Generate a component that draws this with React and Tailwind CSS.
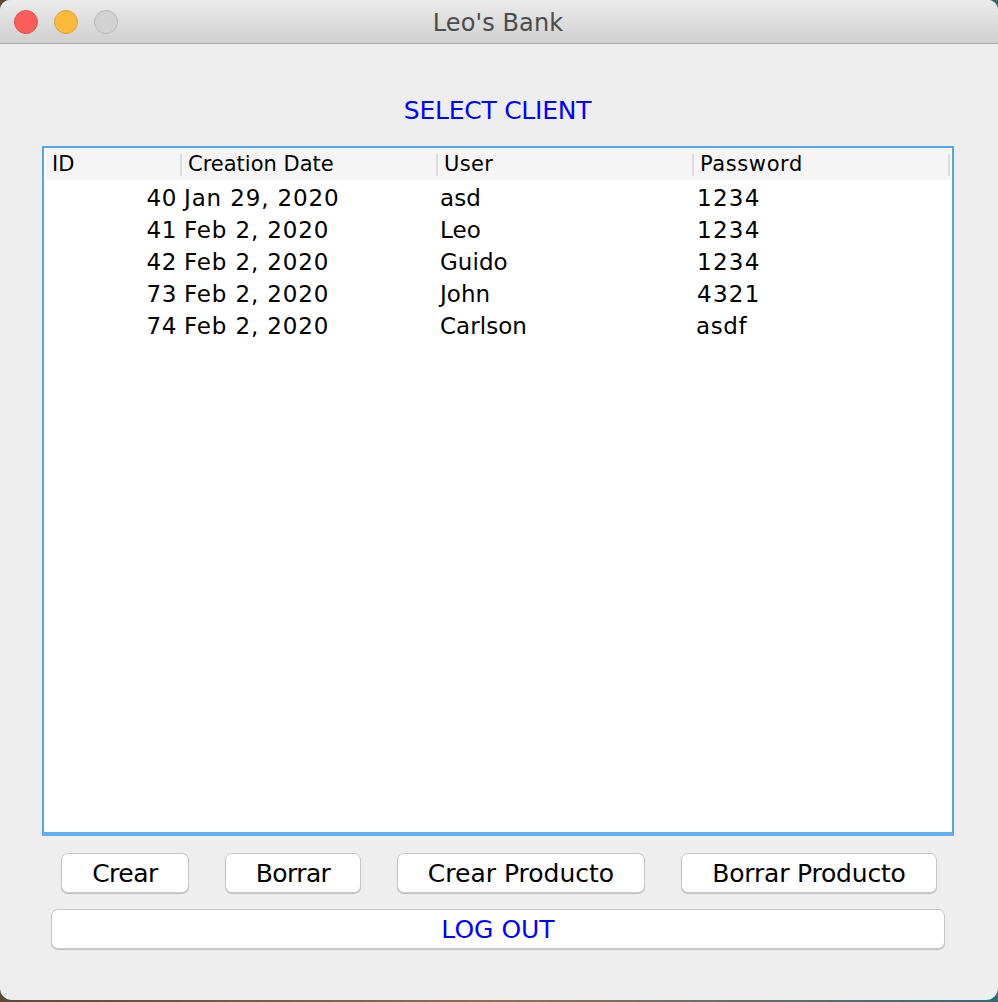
const clients = [
    { id: 40, date: 'Jan 29, 2020', user: 'asd', password: '1234' },
    { id: 41, date: 'Feb 2, 2020', user: 'Leo', password: '1234' },
    { id: 42, date: 'Feb 2, 2020', user: 'Guido', password: '1234' },
    { id: 73, date: 'Feb 2, 2020', user: 'John', password: '4321' },
    { id: 74, date: 'Feb 2, 2020', user: 'Carlson', password: 'asdf' },
];

const btn = 'h-10 bg-white rounded-[7px] border border-[#c8c8c8] shadow-[0_1px_1px_rgba(0,0,0,0.2)] text-[25px] leading-none';

const HeaderCell = ({ className, children }) => (
    <div className={`h-[22px] pl-[6px] flex items-center border-r-2 border-[#dcdcdc] ${className}`}>{children}</div>
);

const App = () => {
    return (
        <div className="w-[998px] h-[1002px] bg-gradient-to-r from-[#5a4a38] via-[#8a7050] to-[#2f6a78] overflow-hidden font-['DejaVu_Sans',sans-serif] text-black">
            <div className="h-[1000px] bg-[#eeeeee] rounded-t-[10px] rounded-b-[12px] overflow-hidden flex flex-col">
                {/* Title bar */}
                <div className="h-[44px] shrink-0 bg-gradient-to-b from-[#ebebeb] to-[#d0d0d0] border-b border-[#a9a9a9] flex items-center relative pl-[14px] gap-[16px]">
                    <span className="w-6 h-6 rounded-full bg-[#fc5e5b] border border-[#e2504e]"></span>
                    <span className="w-6 h-6 rounded-full bg-[#fdb93c] border border-[#e2a233]"></span>
                    <span className="w-6 h-6 rounded-full bg-[#d2d2d2] border border-[#b8b8b8]"></span>
                    <div className="absolute inset-0 pt-[2px] pr-[2px] flex items-center justify-center text-[24px] tracking-[0.1px] text-[#4c4c4c]">Leo's Bank</div>
                </div>

                <div className="h-[102px] pt-[52px] pr-[3px] text-center text-[#0000ff] text-[25px] leading-[30px] tracking-[-0.25px] shrink-0">SELECT CLIENT</div>

                {/* Table */}
                <div className="mx-[42px] h-[690px] w-[912px] border-2 border-[#57a5e8] border-b-4 border-b-[#62aef0] bg-white shrink-0 text-[23px]">
                    <div className="grid grid-cols-[136px_256px_256px_256px] ml-[2px] mr-px mt-px bg-[#f5f5f5] h-[31px] items-center text-[21px]">
                        <HeaderCell>ID</HeaderCell>
                        <HeaderCell>Creation Date</HeaderCell>
                        <HeaderCell className="tracking-[0.3px]">User</HeaderCell>
                        <HeaderCell className="tracking-[0.6px]">Password</HeaderCell>
                    </div>
                    <div className="pt-[2px]">
                        {clients.map((c) => (
                            <div key={c.id} className="grid grid-cols-[136px_256px_256px_256px] ml-[2px] h-[32px] items-center leading-none">
                                <div className="text-right pr-[5px] tracking-[0.6px]">{c.id}</div>
                                <div className="pl-[2px] tracking-[0.85px]">{c.date}</div>
                                <div className="pl-[2px] tracking-[0.05px]">{c.user}</div>
                                <div className={c.password === 'asdf' ? 'pl-[2px] tracking-[0.6px]' : 'pl-[3px] tracking-[1.3px]'}>{c.password}</div>
                            </div>
                        ))}
                    </div>
                </div>

                {/* Buttons */}
                <div className="flex gap-[36px] pl-[61px] mt-[17px] shrink-0">
                    <button className={`${btn} w-[128px] tracking-[-0.5px]`}>Crear</button>
                    <button className={`${btn} w-[136px] tracking-[-0.6px]`}>Borrar</button>
                    <button className={`${btn} w-[248px]`}>Crear Producto</button>
                    <button className={`${btn} w-[256px] tracking-[-0.2px]`}>Borrar Producto</button>
                </div>
                <button className={`${btn} w-[894px] ml-[51px] mt-[16px] text-[#0000ff] shrink-0`}>LOG OUT</button>
            </div>
        </div>
    );
};

export default App;
